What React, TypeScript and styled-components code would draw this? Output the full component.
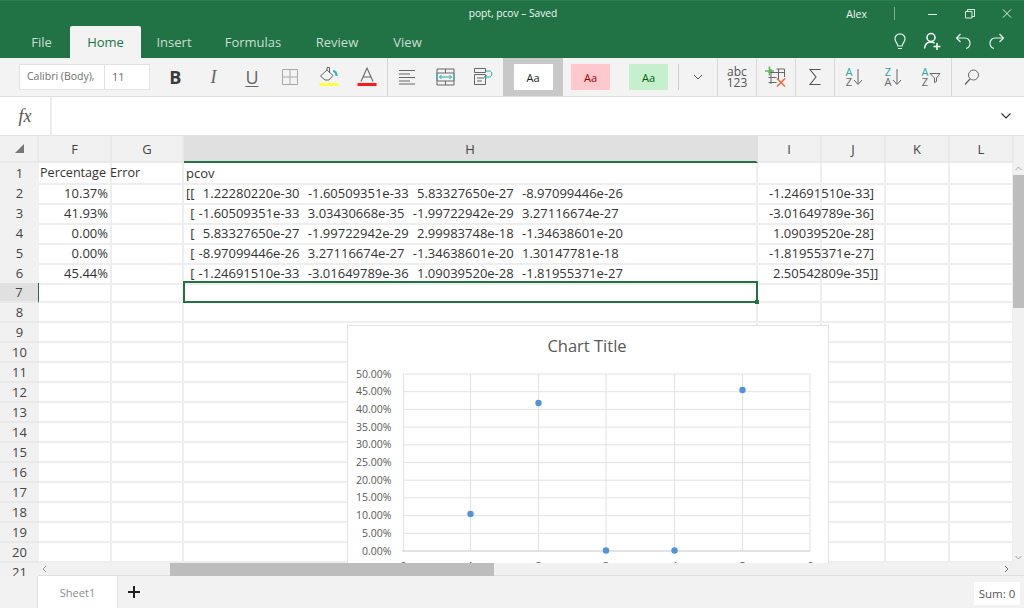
import React from "react";
import styled, { createGlobalStyle } from "styled-components";

const Global = createGlobalStyle`
  html, body { margin: 0; padding: 0; width: 1024px; height: 608px; overflow: hidden; background: #fff; }
  * { box-sizing: border-box; }
  body { font-family: "Open Sans", "Noto Sans", "Liberation Sans", sans-serif; }
`;

const Window = styled.div`
  width: 1024px; height: 608px; display: flex; flex-direction: column; overflow: hidden;
`;
const Head = styled.header`
  height: 58px; background: #217346; color: #fff; display: flex; flex-direction: column;
  border-top: 1px solid #2d7d50;
`;
const TitleRow = styled.div`
  height: 25px; display: grid; grid-template-columns: 1fr 1fr; align-items: center; position: relative; flex: none;
`;
const TitleText = styled.div`
  position: absolute; left: 2px; right: 0; top: 4px; text-align: center; font-size: 10.2px; line-height: 16px; color: #f2f7f4;
`;
const WindowControls = styled.div`
  grid-column: 2; display: flex; align-items: center; justify-content: flex-end; height: 25px; padding-right: 10px;
`;
const UserName = styled.span`
  font-size: 10.5px; color: #f0f6f2; margin-right: 27px;
`;
const VRule = styled.span`
  width: 1px; height: 13px; background: #7fb096; margin-right: 8px;
`;
const CtlIcon = styled.div`
  width: 14px; height: 14px; display: flex; margin-left: 23px;
`;
const TabRow = styled.div`
  flex: 1; display: flex; align-items: flex-end; padding-left: 13px;
`;
const Tab = styled.div<{ $active?: boolean; $w: number }>`
  width: ${(p) => p.$w}px; height: 32px; display: flex; align-items: center; justify-content: center;
  font-size: 13px; border-radius: 2px 2px 0 0;
  background: ${(p) => (p.$active ? "#f3f3f3" : "transparent")};
  color: ${(p) => (p.$active ? "#217346" : "#c9dfd2")};
`;
const QuickIcons = styled.div`
  margin-left: auto; display: flex; align-items: center; gap: 12px; height: 32px; padding-right: 18px; padding-bottom: 2px;
`;
const QuickIcon = styled.span`
  width: 20px; height: 20px; display: flex;
`;

const Ribbon = styled.div`
  height: 39px; background: #f3f3f3; border-bottom: 1px solid #dedede; display: flex; align-items: stretch; flex: none;
`;
const FontGroup = styled.div`
  width: 388px; padding: 6px 0 6px 19px; display: flex; align-items: center; border-right: 1px solid #d2d2d2; flex: none;
`;
const FontBox = styled.div`
  width: 131px; height: 26px; display: flex; background: #fff; border: 1px solid #e2e2e2; margin-right: 6px; flex: none;
`;
const FontName = styled.div`
  width: 85px; overflow: hidden; white-space: nowrap; padding-left: 7px; font-size: 10.5px; line-height: 23px; color: #6e6e6e; border-right: 1px solid #e2e2e2;
`;
const FontSize = styled.div`
  padding-left: 7px; font-size: 11px; line-height: 23px; color: #6e6e6e;
`;
const FmtBtn = styled.div`
  width: 38.4px; height: 26px; display: flex; align-items: center; justify-content: center; flex: none;
`;
const Glyph = styled.span<{ $b?: boolean; $i?: boolean; $u?: boolean }>`
  font-family: ${(p) => (p.$i ? '"Liberation Serif", serif' : '"Open Sans", sans-serif')};
  font-size: 18px; line-height: 20px; color: ${(p) => (p.$b ? "#3b3b3b" : "#666")};
  font-weight: ${(p) => (p.$b ? 700 : 400)}; font-style: ${(p) => (p.$i ? "italic" : "normal")};
  text-decoration: ${(p) => (p.$u ? "underline" : "none")}; text-underline-offset: 2px; text-decoration-thickness: 1px;
`;
const AlignGroup = styled.div`
  width: 115px; display: flex; align-items: center; flex: none;
`;
const IconSlot = styled.div<{ $w: number }>`
  width: ${(p) => p.$w}px; display: flex; align-items: center; justify-content: center; flex: none;
`;
const StyleActive = styled.div`
  width: 60px; background: #c8c8c8; display: flex; align-items: center; justify-content: center; flex: none;
`;
const Swatch = styled.div<{ $bg: string; $fg: string }>`
  width: 39px; height: 26px; background: ${(p) => p.$bg}; color: ${(p) => p.$fg};
  font-size: 11px; font-weight: 400; display: flex; align-items: center; justify-content: center;
`;
const SwatchWrap = styled.div<{ $w: number; $left: number }>`
  width: ${(p) => p.$w}px; padding-left: ${(p) => p.$left}px; display: flex; align-items: center; flex: none;
`;
const ThinRule = styled.span`
  width: 1px; height: 26px; background: #cfcfcf; align-self: center; flex: none;
`;
const ChevSlot = styled.div`
  width: 39px; display: flex; align-items: center; justify-content: center; border-right: 1px solid #d8d8d8; flex: none;
`;
const ToolBtn = styled.div<{ $w: number; $line?: boolean }>`
  width: ${(p) => p.$w}px; display: flex; align-items: center; justify-content: center; flex: none;
  border-right: ${(p) => (p.$line ? "1px solid #d8d8d8" : "0")};
`;
const AbcText = styled.div`
  font-size: 12px; line-height: 11px; color: #555; text-align: center;
`;
const SortWrap = styled.div`
  display: flex; align-items: center; gap: 1px;
`;
const SortLetters = styled.div`
  display: flex; flex-direction: column; font-size: 11px; line-height: 10.5px; text-align: center;
`;
const SortLetter = styled.span<{ $teal?: boolean }>`
  color: ${(p) => (p.$teal ? "#2aa6a6" : "#666")};
`;

const FormulaBar = styled.div`
  height: 39px; display: flex; background: #fff; border-bottom: 1px solid #e4e4e4; flex: none;
`;
const FxCell = styled.div`
  width: 52px; border-right: 2px solid #ececec; display: flex; align-items: center; justify-content: center;
  font-family: "Liberation Serif", serif; font-style: italic; font-size: 18px; color: #555;
`;
const FormulaInput = styled.div`
  flex: 1; display: flex; align-items: center; justify-content: flex-end; padding-right: 12px;
`;

const Sheet = styled.div`
  height: 440px; position: relative; overflow: hidden; background: #fff; flex: none;
`;
const COLS = "39px 73px 72px 574px 64px 64px 64px 64px 1fr";
const HeaderRow = styled.div`
  display: grid; grid-template-columns: ${COLS}; height: 27px; background: #f1f1f1;
`;
const ColHead = styled.div<{ $sel?: boolean }>`
  display: flex; align-items: center; justify-content: center; font-size: 13px; color: #444;
  border-right: 2px solid ${(p) => (p.$sel ? "#e0e0e0" : "#e9e9e9")};
  background: ${(p) => (p.$sel ? "#e0e0e0" : "#f1f1f1")};
  border-bottom: 2px solid ${(p) => (p.$sel ? "#217346" : "#e9e9e9")};
`;
const Row = styled.div`
  display: grid; grid-template-columns: ${COLS}; height: 20px;
`;
const RowHead = styled.div<{ $sel?: boolean }>`
  background: ${(p) => (p.$sel ? "#e0e0e0" : "#f1f1f1")}; color: #444; font-size: 13px; display: flex; align-items: center; justify-content: center;
  border-bottom: 2px solid #e9e9e9; border-right: ${(p) => (p.$sel ? "1px solid #217346" : "0")};
`;
const Cell = styled.div<{ $right?: boolean; $pad?: number; $size?: number }>`
  font-size: ${(p) => p.$size ?? 13}px; line-height: 20px; color: #333; white-space: pre; position: relative;
  word-spacing: 0.8px;
  padding: 0 2px 0 ${(p) => p.$pad ?? 2}px;
  text-align: ${(p) => (p.$right ? "right" : "left")};
  border-right: 2px solid #eee; border-bottom: 2px solid #eee;
`;
const Selection = styled.div`
  position: absolute; left: 183px; top: 145px; width: 575px; height: 22px; border: 2px solid #217346; pointer-events: none;
  &::after { content: ""; position: absolute; right: -3px; bottom: -3px; width: 4px; height: 4px; background: #217346; }
`;
const Corner = styled.span`
  width: 0; height: 0; border-style: solid; border-width: 0 0 9px 9px; border-color: transparent transparent #777 transparent; margin-left: 2px;
`;
const ChartBox = styled.div`
  position: absolute; left: 347px; top: 189px; width: 482px; height: 275px; background: #fff; border: 1px solid #e2e2e2;
`;
const VScroll = styled.div`
  position: absolute; right: 0; top: 27px; bottom: 13px; width: 11px; background: #f1f1f1; z-index: 3;
  display: flex; flex-direction: column; justify-content: flex-start;
`;
const VThumb = styled.div`
  height: 133px; width: 11px; margin-top: 12px; background: #bdbdbd;
`;
const ArrowStart = styled.span`
  position: absolute; left: 0; top: 0; display: flex;
`;
const ArrowEndV = styled.span`
  position: absolute; left: 0; bottom: 0; display: flex;
`;
const ArrowEndH = styled.span`
  position: absolute; right: 12px; top: 0; display: flex;
`;
const HScroll = styled.div`
  position: absolute; left: 39px; right: 0; bottom: 0; height: 13px; background: #f1f1f1; z-index: 3; border-bottom: 1px solid #e0e0e0;
`;
const HThumb = styled.div`
  position: absolute; left: 131px; top: 0; width: 324px; height: 13px; background: #bdbdbd;
`;

const Footer = styled.div`
  height: 32px; background: #f2f2f2; display: flex; align-items: stretch; padding-left: 37px; flex: none;
`;
const SheetTab = styled.div`
  width: 81px; background: #fff; color: #8c8c8c; font-size: 11px; display: flex; align-items: center; justify-content: center;
  border-left: 1px solid #e0e0e0; border-right: 1px solid #e0e0e0;
`;
const AddSheet = styled.div`
  width: 32px; display: flex; align-items: center; justify-content: center;
`;
const SumBox = styled.div`
  margin: 6px 4px 3px auto; width: 46px; background: #fff; font-size: 11.5px; color: #555;
  display: flex; align-items: center; justify-content: center; white-space: nowrap;
`;

const columns: [string, boolean][] = [
  ["", false], ["F", false], ["G", false], ["H", true], ["I", false], ["J", false], ["K", false], ["L", false],
];

const data: Record<number, { f?: string; h?: string; i?: string; ipad?: number }> = {
  1: { f: "Percentage Error", h: "pcov" },
  2: { f: "10.37%", h: "[[  1.22280220e-30  -1.60509351e-33  5.83327650e-27  -8.97099446e-26", i: "-1.24691510e-33]", ipad: 11 },
  3: { f: "41.93%", h: " [ -1.60509351e-33  3.03430668e-35  -1.99722942e-29  3.27116674e-27", i: "-3.01649789e-36]", ipad: 11 },
  4: { f: "0.00%", h: " [  5.83327650e-27  -1.99722942e-29  2.99983748e-18  -1.34638601e-20", i: "1.09039520e-28]", ipad: 15 },
  5: { f: "0.00%", h: " [ -8.97099446e-26  3.27116674e-27  -1.34638601e-20  1.30147781e-18", i: "-1.81955371e-27]", ipad: 11 },
  6: { f: "45.44%", h: " [ -1.24691510e-33  -3.01649789e-36  1.09039520e-28  -1.81955371e-27", i: "2.50542809e-35]]", ipad: 15 },
};

const rows = Array.from({ length: 21 }, (_, i) => i + 1);

const yLabels = ["50.00%", "45.00%", "40.00%", "35.00%", "30.00%", "25.00%", "20.00%", "15.00%", "10.00%", "5.00%", "0.00%"];
const xGrid = [55.5, 122.5, 190.5, 258, 326.5, 394.5, 462];
const points: [number, number][] = [[122.5, 188], [190.5, 77], [258, 224.5], [326.5, 224.5], [394.5, 64]];

const Chart = () => (
  <svg width="480" height="273" viewBox="0 0 480 273" fontFamily='"Open Sans", sans-serif'>
    <text x="239" y="26" textAnchor="middle" fontSize="16.5" fill="#595959">Chart Title</text>
    {yLabels.map((l, i) => {
      const y = 48 + i * 17.7;
      return (
        <g key={l}>
          <line x1="55" x2="462" y1={y} y2={y} stroke="#e2e2e2" strokeWidth="1" />
          <text x="43.5" y={y + 3.5} textAnchor="end" fontSize="10.5" fill="#595959">{l}</text>
        </g>
      );
    })}
    {xGrid.map((x) => (
      <line key={x} x1={x} x2={x} y1="48" y2="225" stroke="#e2e2e2" strokeWidth="1" />
    ))}
    <line x1="54" x2="462" y1="225" y2="225" stroke="#d6d6d6" strokeWidth="1" />
    {xGrid.map((x, i) => (
      <text key={x} x={x} y="244" textAnchor="middle" fontSize="10.5" fill="#595959">{i}</text>
    ))}
    {points.map(([x, y]) => (
      <circle key={x} cx={x} cy={y} r="3.2" fill="#4f93d8" />
    ))}
  </svg>
);

const SortIcon = ({ top, bottom, filter }: { top: string; bottom: string; filter?: boolean }) => (
  <SortWrap>
    <SortLetters>
      <SortLetter $teal>{top}</SortLetter>
      <SortLetter>{bottom}</SortLetter>
    </SortLetters>
    {filter ? (
      <svg width="13" height="14" viewBox="0 0 13 14" fill="none" stroke="#666"><path d="M1 3.5h10L7.5 8v3.5l-2 1V8z" /></svg>
    ) : (
      <svg width="10" height="20" viewBox="0 0 10 20" fill="none" stroke="#666"><path d="M5 2v15M1 13l4 4.5L9 13" /></svg>
    )}
  </SortWrap>
);

export default function App() {
  return (
    <Window>
      <Global />
      <Head>
        <TitleRow>
          <TitleText>popt, pcov – Saved</TitleText>
          <WindowControls>
            <UserName>Alex</UserName>
            <VRule />
            <CtlIcon>
              <svg width="14" height="14" viewBox="0 0 14 14" stroke="#dfeee6"><path d="M2 7.5h9" /></svg>
            </CtlIcon>
            <CtlIcon>
              <svg width="14" height="14" viewBox="0 0 14 14" fill="none" stroke="#dfeee6"><path d="M2.5 4.5h6.5v6.5H2.5zM4.5 4.5V2.5h7v7H9" /></svg>
            </CtlIcon>
            <CtlIcon>
              <svg width="14" height="14" viewBox="0 0 14 14" stroke="#dfeee6"><path d="M3 2.5l8 8M11 2.5l-8 8" /></svg>
            </CtlIcon>
          </WindowControls>
        </TitleRow>
        <TabRow>
          <Tab $w={57}>File</Tab>
          <Tab $w={71} $active>Home</Tab>
          <Tab $w={66}>Insert</Tab>
          <Tab $w={92}>Formulas</Tab>
          <Tab $w={76}>Review</Tab>
          <Tab $w={65}>View</Tab>
          <QuickIcons>
            <QuickIcon>
              <svg width="20" height="20" viewBox="0 0 20 20" fill="none" stroke="#e6f1ea" strokeWidth="1.2"><path d="M7.8 15c0-3-2.8-3.8-2.8-7.2a5 5 0 0 1 10 0c0 3.4-2.8 4.2-2.8 7.2zM8 17.5h4" /></svg>
            </QuickIcon>
            <QuickIcon>
              <svg width="20" height="20" viewBox="0 0 20 20" fill="none" stroke="#fff" strokeWidth="1.5"><circle cx="9" cy="6.5" r="4" /><path d="M2.5 17.5c.4-4 3-6.5 6.5-6.5 1.6 0 2.6.4 3.6 1.1M15 12v7M11.5 15.5h7" /></svg>
            </QuickIcon>
            <QuickIcon>
              <svg width="20" height="20" viewBox="0 0 20 20" fill="none" stroke="#e6f1ea" strokeWidth="1.2"><path d="M6.5 3L2.5 7l4 4M3 7h8a5 5 0 0 1 5 5c0 3-2 5-4 5.5" /></svg>
            </QuickIcon>
            <QuickIcon>
              <svg width="20" height="20" viewBox="0 0 20 20" fill="none" stroke="#e6f1ea" strokeWidth="1.2"><path d="M13.5 3l4 4-4 4M17 7H9a5 5 0 0 0-5 5c0 3 2 5 4 5.5" /></svg>
            </QuickIcon>
          </QuickIcons>
        </TabRow>
      </Head>

      <Ribbon>
        <FontGroup>
          <FontBox>
            <FontName>Calibri (Body),</FontName>
            <FontSize>11</FontSize>
          </FontBox>
          <FmtBtn><Glyph $b>B</Glyph></FmtBtn>
          <FmtBtn><Glyph $i>I</Glyph></FmtBtn>
          <FmtBtn><Glyph $u>U</Glyph></FmtBtn>
          <FmtBtn>
            <svg width="18" height="18" viewBox="0 0 18 18" fill="none" stroke="#a8a8a8"><path d="M1.5 1.5h15v15h-15zM9 1.5v15M1.5 9h15" /></svg>
          </FmtBtn>
          <FmtBtn>
            <svg width="22" height="22" viewBox="0 0 22 22" fill="none">
              <path d="M2.5 10L9 4l6 5.5-4 4.5H7z" stroke="#666" />
              <path d="M9 4V1.5h2.5V7" stroke="#666" />
              <path d="M15 5c2.5.3 3.5 2 3.5 5" stroke="#35b4bd" strokeWidth="2.2" />
              <rect x="1.5" y="17" width="19" height="3" fill="#ffff3b" />
            </svg>
          </FmtBtn>
          <FmtBtn>
            <svg width="22" height="22" viewBox="0 0 22 22" fill="none">
              <path d="M5 15.5L11 2l6 13.5M7 11h8" stroke="#666" strokeWidth="1.1" />
              <rect x="1.5" y="17" width="19" height="3" fill="#ff1a1a" />
            </svg>
          </FmtBtn>
        </FontGroup>
        <AlignGroup>
          <IconSlot $w={38}>
            <svg width="18" height="16" viewBox="0 0 18 16" stroke="#666"><path d="M1 1.5h16M1 5h11M1 8.5h16M1 12h11M1 15h16" /></svg>
          </IconSlot>
          <IconSlot $w={38}>
            <svg width="19" height="18" viewBox="0 0 19 18" fill="none">
              <path d="M1 1h17v16H1zM1 5h17M1 13h17M9.5 1v4M9.5 13v4" stroke="#666" />
              <path d="M3.5 9h12M5.5 7l-2 2 2 2M13.5 7l2 2-2 2" stroke="#2aa6a6" />
              <path d="M1 5v8M18 5v8" stroke="#2aa6a6" />
            </svg>
          </IconSlot>
          <IconSlot $w={38}>
            <svg width="20" height="20" viewBox="0 0 20 20" fill="none">
              <path d="M1.5 1.5h11v4h-11zM1.5 7.5h11v10h-11zM4 11h7M4 14h5" stroke="#666" />
              <path d="M12.5 4h4c3 0 3 6 0 6h-5M13.5 8l-2 2 2 2" stroke="#2aa6a6" />
            </svg>
          </IconSlot>
        </AlignGroup>
        <StyleActive><Swatch $bg="#fff" $fg="#222">Aa</Swatch></StyleActive>
        <SwatchWrap $w={58} $left={8}><Swatch $bg="#ffc7ce" $fg="#9c0006">Aa</Swatch></SwatchWrap>
        <SwatchWrap $w={57} $left={8}><Swatch $bg="#c6efce" $fg="#006100">Aa</Swatch></SwatchWrap>
        <ThinRule />
        <ChevSlot>
          <svg width="12" height="8" viewBox="0 0 12 8" fill="none" stroke="#555"><path d="M2 2l4 4 4-4" /></svg>
        </ChevSlot>
        <ToolBtn $w={39} $line>
          <AbcText>abc<br />123</AbcText>
        </ToolBtn>
        <ToolBtn $w={39} $line>
          <svg width="22" height="22" viewBox="0 0 22 22" fill="none">
            <path d="M3.5 6.5h16M3.5 11.5h8M3.5 16.5h8M6 3v15M13.5 3v11M19.5 3h-8M19.5 3v8" stroke="#666" />
            <path d="M0 5h9M4.5 .5v9" stroke="#5cb85c" strokeWidth="1.6" />
            <path d="M12 12.5l8 8M20 12.5l-8 8" stroke="#f0633a" strokeWidth="1.4" />
          </svg>
        </ToolBtn>
        <ToolBtn $w={39} $line>
          <svg width="14" height="18" viewBox="0 0 14 18" fill="none" stroke="#555" strokeWidth="1.1"><path d="M12.5 1.5H2l6 7.5-6 7.5h10.5" /></svg>
        </ToolBtn>
        <ToolBtn $w={39}><SortIcon top="A" bottom="Z" /></ToolBtn>
        <ToolBtn $w={39}><SortIcon top="Z" bottom="A" /></ToolBtn>
        <ToolBtn $w={39} $line><SortIcon top="A" bottom="Z" filter /></ToolBtn>
        <ToolBtn $w={39}>
          <svg width="18" height="18" viewBox="0 0 18 18" fill="none" stroke="#666"><circle cx="10.5" cy="7" r="5" /><path d="M7 11l-5 5.5" strokeWidth="1.3" /></svg>
        </ToolBtn>
      </Ribbon>

      <FormulaBar>
        <FxCell>fx</FxCell>
        <FormulaInput>
          <svg width="12" height="8" viewBox="0 0 12 8" fill="none" stroke="#333" strokeWidth="1.2"><path d="M1.5 1.5L6 6l4.5-4.5" /></svg>
        </FormulaInput>
      </FormulaBar>

      <Sheet>
        <HeaderRow>
          {columns.map(([c, sel], i) => (
            <ColHead key={i} $sel={sel}>{i === 0 ? <Corner /> : c}</ColHead>
          ))}
        </HeaderRow>
        {rows.map((r) => {
          const d = data[r] ?? {};
          return (
            <Row key={r}>
              <RowHead $sel={r === 7}>{r}</RowHead>
              <Cell $right={r !== 1} $pad={1} $size={r === 1 ? 12.6 : 13}>{d.f}</Cell>
              <Cell />
              <Cell>{d.h}</Cell>
              <Cell $pad={d.ipad}>{d.i}</Cell>
              <Cell />
              <Cell />
              <Cell />
              <Cell />
            </Row>
          );
        })}
        <Selection />
        <ChartBox><Chart /></ChartBox>
        <VScroll>
          <ArrowStart>
            <svg width="11" height="12" viewBox="0 0 11 12" fill="none" stroke="#aaa"><path d="M2.5 7l3-3 3 3" /></svg>
          </ArrowStart>
          <VThumb />
          <ArrowEndV>
            <svg width="11" height="12" viewBox="0 0 11 12" fill="none" stroke="#999"><path d="M2.5 5l3 3 3-3" /></svg>
          </ArrowEndV>
        </VScroll>
        <HScroll>
          <ArrowStart>
            <svg width="12" height="12" viewBox="0 0 12 12" fill="none" stroke="#999"><path d="M7 3L4 6l3 3" /></svg>
          </ArrowStart>
          <HThumb />
          <ArrowEndH>
            <svg width="12" height="12" viewBox="0 0 12 12" fill="none" stroke="#777"><path d="M5 3l3 3-3 3" /></svg>
          </ArrowEndH>
        </HScroll>
      </Sheet>

      <Footer>
        <SheetTab>Sheet1</SheetTab>
        <AddSheet>
          <svg width="14" height="14" viewBox="0 0 14 14" stroke="#222" strokeWidth="2"><path d="M7 1v12M1 7h12" /></svg>
        </AddSheet>
        <SumBox>Sum: 0</SumBox>
      </Footer>
    </Window>
  );
}
